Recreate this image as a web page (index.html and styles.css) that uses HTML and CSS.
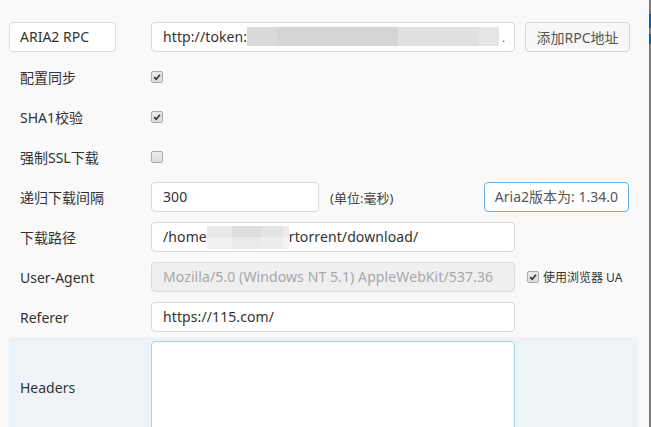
FILE: index.html
```html
<!doctype html>
<html>
<head>
<meta charset="utf-8">
<title>设置</title>
<link rel="stylesheet" href="styles.css">
</head>
<body>
<div class="page">
	<div class="settings">
		<div class="row">
			<div class="label"><span class="rpc-name">ARIA2 RPC</span></div>
			<div class="field">
				<div class="input">http://token:<span class="mask mask-token"></span><span class="dot">.</span></div>
			</div>
			<div class="extra"><button class="btn">添加RPC地址</button></div>
		</div>

		<div class="row">
			<div class="label">配置同步</div>
			<div class="field"><span class="cb checked"><svg viewBox="0 0 12 12"><path d="M2.6 6.2 L5 8.6 L9.6 3.2" /></svg></span></div>
			<div class="extra"></div>
		</div>

		<div class="row">
			<div class="label">SHA1校验</div>
			<div class="field"><span class="cb checked"><svg viewBox="0 0 12 12"><path d="M2.6 6.2 L5 8.6 L9.6 3.2" /></svg></span></div>
			<div class="extra"></div>
		</div>

		<div class="row">
			<div class="label">强制SSL下载</div>
			<div class="field"><span class="cb"></span></div>
			<div class="extra"></div>
		</div>

		<div class="row">
			<div class="label">递归下载间隔</div>
			<div class="field wide">
				<div class="input short">300</div>
				<span class="unit">(单位:毫秒)</span>
				<span class="version">Aria2版本为: 1.34.0</span>
			</div>
		</div>

		<div class="row">
			<div class="label">下载路径</div>
			<div class="field">
				<div class="input">/home<span class="mask mask-path"></span>rtorrent/download/</div>
			</div>
			<div class="extra"></div>
		</div>

		<div class="row">
			<div class="label">User-Agent</div>
			<div class="field">
				<div class="input disabled">Mozilla/5.0 (Windows NT 5.1) AppleWebKit/537.36</div>
			</div>
			<div class="extra">
				<span class="cb checked small"><svg viewBox="0 0 12 12"><path d="M2.6 6.2 L5 8.6 L9.6 3.2" /></svg></span>
				<span class="cb-text">使用浏览器 UA</span>
			</div>
		</div>

		<div class="row">
			<div class="label">Referer</div>
			<div class="field">
				<div class="input">https://115.com/</div>
			</div>
			<div class="extra"></div>
		</div>

		<div class="row headers">
			<div class="label">Headers</div>
			<div class="field"><div class="textarea"></div></div>
			<div class="extra"></div>
		</div>
	</div>

	<div class="edge">
		<span class="edge-mark first"></span>
		<span class="edge-mark second"></span>
	</div>
</div>
</body>
</html>
```

FILE: styles.css
```css
html, body {
	margin: 0;
	height: 100%;
	overflow: hidden;
}

body {
	background-color: #f9f9f9;
	color: #333;
	font-family: "Noto Sans", "Noto Sans CJK SC", sans-serif;
	font-size: 14px;
}

.page {
	display: flex;
	height: 100%;
}

.settings {
	flex: 1;
	padding: 17px 0 0 9px;
}

.row {
	display: grid;
	grid-template-columns: 142px 364px 123px;
	height: 40px;
	align-items: center;
}

.label {
	padding-left: 11px;
	white-space: nowrap;
}

.field {
	display: flex;
	align-items: center;
}

.field.wide {
	grid-column: 2 / 4;
	padding-right: 9px;
}

.extra {
	display: flex;
	align-items: center;
	padding-left: 10px;
}

.rpc-name {
	display: inline-block;
	box-sizing: border-box;
	width: 107px;
	height: 30px;
	line-height: 28px;
	margin-left: -11px;
	padding: 0 10px;
	background: #fff;
	border: 1px solid #ddd;
	border-radius: 4px;
}

.input {
	box-sizing: border-box;
	width: 364px;
	height: 30px;
	line-height: 28px;
	padding: 0 11px;
	background: #fff;
	border: 1px solid #d9d9d9;
	border-radius: 4px;
	white-space: nowrap;
	overflow: hidden;
	letter-spacing: 0.1px;
}

.input.short {
	width: 168px;
}

.input.disabled {
	background: #efefef;
	border-color: #dcdcdc;
	color: #a8a8a8;
}

.mask {
	display: inline-block;
	vertical-align: middle;
	height: 19px;
	margin-top: -3px;
}

.mask-token {
	width: 252px;
	background: linear-gradient(to right, #dadada 0 12%, #d5d5d5 12% 60%, #e0e0e0 60% 92%, #e6e5e7 92%);
}

.mask-path {
	width: 82px;
	height: 23px;
	margin-top: -1px;
	background:
		linear-gradient(to bottom, rgba(255,255,255,0) 50%, rgba(255,255,255,0.35) 50%),
		linear-gradient(to right, #e8e8e8 0 30%, #dedede 30% 66%, #e4e4e4 66% 93%, #f3e9e9 93%);
}

.dot {
	margin-left: 3px;
	font-size: 10px;
}

.btn {
	box-sizing: border-box;
	width: 105px;
	height: 30px;
	padding: 0;
	background: #f7f7f7;
	border: 1px solid #d6d6d6;
	border-radius: 4px;
	color: #555;
	font-family: inherit;
	font-size: 14px;
}

.cb {
	display: inline-block;
	flex-shrink: 0;
	box-sizing: border-box;
	width: 12px;
	height: 12px;
	background: linear-gradient(#ececec, #dcdcdc);
	border: 1px solid #a9a9a9;
	border-radius: 2px;
}

.cb svg {
	display: block;
	width: 10px;
	height: 10px;
}

.cb path {
	fill: none;
	stroke: #333;
	stroke-width: 2;
}

.cb.small {
	margin-left: 2px;
}

.cb-text {
	margin-left: 4px;
	font-size: 12px;
	white-space: nowrap;
}

.unit {
	margin-left: 11px;
	color: #444;
	font-size: 13px;
}

.version {
	margin-left: auto;
	box-sizing: border-box;
	height: 30px;
	line-height: 28px;
	padding: 0 10px;
	background: #fff;
	border: 1px solid #66aee8;
	border-radius: 4px;
	color: #555;
}

.row.headers {
	height: auto;
	align-items: center;
	padding-top: 4px;
	background: #eef3f8;
	width: 629px;
}

.textarea {
	box-sizing: border-box;
	width: 364px;
	height: 92px;
	background: #fff;
	border: 1px solid #9ed5f7;
	border-radius: 4px;
}

.edge {
	width: 2px;
	background: #7b7b7b;
	display: flex;
	flex-direction: column;
}

.edge-mark {
	display: block;
	background: #0063b1;
}

.edge-mark.first {
	height: 14px;
	margin-top: 14px;
}

.edge-mark.second {
	height: 10px;
	margin-top: 6px;
}
```
